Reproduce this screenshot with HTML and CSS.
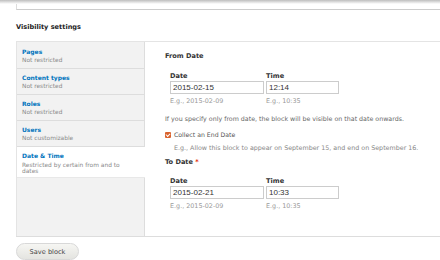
FILE: index.html
```html
<!DOCTYPE html>
<html lang="en">
<head>
  <meta charset="UTF-8" />
  <title>Block visibility</title>
  <link rel="stylesheet" href="styles.css">
</head>
<body>

  <div class="toolbar-shadow"></div>
  <div class="prev-box"></div>

  <h2 class="section-title">Visibility settings</h2>

  <!-- Vertical tabs -->
  <div class="vertical-tabs">
    <ul class="tabs-list">
      <li class="tab">
        <a href="#">Pages</a>
        <span class="summary">Not restricted</span>
      </li>
      <li class="tab">
        <a href="#">Content types</a>
        <span class="summary">Not restricted</span>
      </li>
      <li class="tab">
        <a href="#">Roles</a>
        <span class="summary">Not restricted</span>
      </li>
      <li class="tab">
        <a href="#">Users</a>
        <span class="summary">Not customizable</span>
      </li>
      <li class="tab selected">
        <a href="#">Date &amp; Time</a>
        <span class="summary">Restricted by certain from and to dates</span>
      </li>
    </ul>

    <div class="tab-pane">
      <h4 class="group-title">From Date</h4>
      <div class="datetime">
        <div class="field date-field">
          <label>Date</label>
          <input type="text" value="2015-02-15">
          <div class="hint">E.g., 2015-02-09</div>
        </div>
        <div class="field time-field">
          <label>Time</label>
          <input type="text" value="12:14">
          <div class="hint">E.g., 10:35</div>
        </div>
      </div>
      <p class="description">If you specify only from date, the block will be visible on that date onwards.</p>

      <div class="checkbox-row">
        <span class="checkbox"></span>
        <span>Collect an End Date</span>
      </div>
      <p class="description indent">E.g., Allow this block to appear on September 15, and end on September 16.</p>

      <h4 class="group-title">To Date <span class="required">*</span></h4>
      <div class="datetime second">
        <div class="field date-field">
          <label>Date</label>
          <input type="text" value="2015-02-21">
          <div class="hint">E.g., 2015-02-09</div>
        </div>
        <div class="field time-field">
          <label>Time</label>
          <input type="text" value="10:33">
          <div class="hint">E.g., 10:35</div>
        </div>
      </div>
    </div>
  </div>

  <button class="button">Save block</button>

</body>
</html>
```

FILE: styles.css
```css
/* Base */
* {
  margin: 0;
  padding: 0;
  box-sizing: border-box;
}

body {
  font-family: 'DejaVu Sans', sans-serif;
  background: #fff;
  color: #333;
  width: 440px;
  height: 260px;
  overflow: hidden;
}

/* Top area */
.toolbar-shadow {
  height: 4px;
  background: linear-gradient(180deg, #bdbdbd, #fff);
}

.prev-box {
  margin-left: 16px;
  height: 6px;
  border-left: 1px solid #ddd;
  border-bottom: 1px solid #ccc;
}

.section-title {
  font-size: 6.6px;
  font-weight: 700;
  color: #222;
  margin: 13px 0 0 16px;
  line-height: 8px;
}

/* Vertical tabs */
.vertical-tabs {
  display: flex;
  margin: 10px 0 0 16px;
  height: 196px;
  border-top: 1px solid #e4e4e4;
  border-bottom: 1px solid #ddd;
}

.tabs-list {
  list-style: none;
  width: 129px;
  flex-shrink: 0;
  background: #f2f2f2;
  border-left: 1px solid #e4e4e4;
  border-right: 1px solid #ddd;
}

.tab {
  height: 26px;
  padding: 5px 12px 0 5px;
  border-bottom: 1px solid #ddd;
}

.tab:first-child {
  height: 27px;
  padding-top: 6px;
}

.tab a {
  display: block;
  font-size: 6px;
  font-weight: 700;
  color: #0074bd;
  text-decoration: none;
  line-height: 8px;
}

.tab .summary {
  display: block;
  font-size: 5.9px;
  color: #8a8a8a;
  line-height: 7px;
  margin-top: 1px;
}

.tab.selected {
  height: 31px;
  background: #fff;
  margin-right: -1px;
  border-bottom: 1px solid #e8e8e8;
}

.tab.selected .summary {
  line-height: 6px;
  margin-top: 2px;
}

.tab-pane {
  flex: 1;
  padding: 10px 0 0 20px;
}

.group-title {
  font-size: 6.6px;
  font-weight: 700;
  color: #333;
  line-height: 8px;
}

.required {
  color: #e32700;
}

.datetime {
  display: flex;
  gap: 2px;
  margin: 12px 0 0 5px;
}

.datetime.second {
  margin-top: 11px;
}

.field label {
  display: block;
  font-size: 6.6px;
  font-weight: 700;
  color: #333;
  line-height: 8px;
}

.field input {
  display: block;
  height: 13px;
  margin-top: 1px;
  border: 1px solid #ccc;
  font-family: 'Liberation Sans', sans-serif;
  font-size: 8px;
  color: #333;
  padding: 0 2px;
}

.date-field input {
  width: 94px;
}

.time-field input {
  width: 73px;
}

.hint {
  font-size: 6.4px;
  color: #999;
  line-height: 8px;
  margin-top: 3px;
}

.description {
  font-size: 6.3px;
  color: #666;
  line-height: 8px;
  margin-top: 10px;
}

.description.indent {
  margin: 5px 0 6px 9px;
  color: #888;
  font-size: 6.35px;
}

.checkbox-row {
  display: flex;
  align-items: center;
  gap: 3px;
  margin-top: 8px;
  font-size: 6.2px;
  color: #555;
  line-height: 8px;
}

.checkbox {
  width: 6px;
  height: 6px;
  background: #d9632e;
  border-radius: 1px;
  position: relative;
}

.checkbox::after {
  content: "";
  position: absolute;
  left: 1px;
  top: 0.5px;
  width: 3px;
  height: 2px;
  border-left: 1px solid #fff;
  border-bottom: 1px solid #fff;
  transform: rotate(-45deg);
}

/* Save button */
.button {
  display: block;
  margin: 6px 0 0 16px;
  width: 63px;
  height: 17px;
  border: 1px solid #d8d8d8;
  border-radius: 9px;
  background: linear-gradient(180deg, #f6f6f3, #e4e4e0);
  font-family: 'DejaVu Sans', sans-serif;
  font-size: 6.6px;
  color: #444;
}
```
